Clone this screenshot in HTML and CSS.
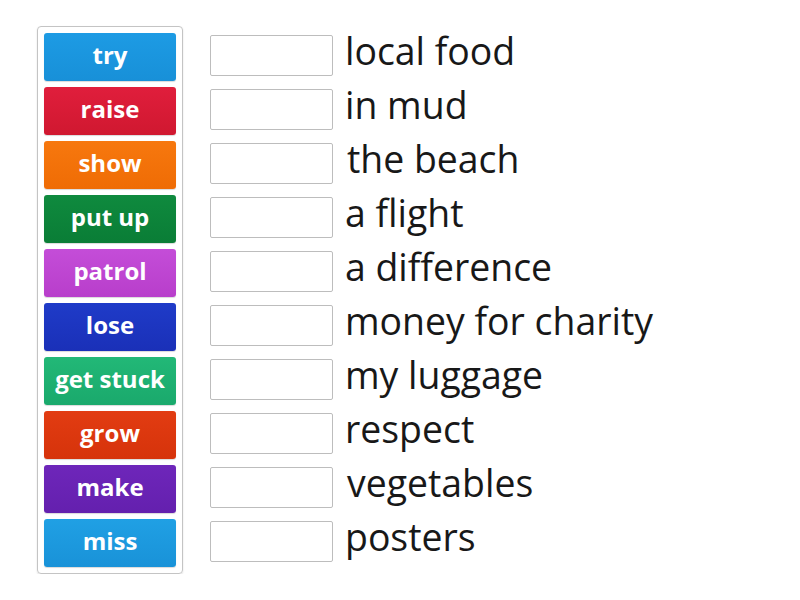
FILE: index.html
```html
<!DOCTYPE html>
<html>
<head>
<meta charset="utf-8">
<link rel="stylesheet" href="styles.css">
</head>
<body>
<div class="page">
  <div class="bank">
    <div class="tile c-try">try</div>
    <div class="tile c-raise">raise</div>
    <div class="tile c-show">show</div>
    <div class="tile c-putup">put up</div>
    <div class="tile c-patrol">patrol</div>
    <div class="tile c-lose">lose</div>
    <div class="tile c-stuck">get stuck</div>
    <div class="tile c-grow">grow</div>
    <div class="tile c-make">make</div>
    <div class="tile c-miss">miss</div>
  </div>
  <div class="rows">
    <div class="row"><div class="slot"></div><div class="phrase">local food</div></div>
    <div class="row"><div class="slot"></div><div class="phrase">in mud</div></div>
    <div class="row"><div class="slot"></div><div class="phrase shift">the beach</div></div>
    <div class="row"><div class="slot"></div><div class="phrase">a flight</div></div>
    <div class="row"><div class="slot"></div><div class="phrase">a difference</div></div>
    <div class="row"><div class="slot"></div><div class="phrase">money for charity</div></div>
    <div class="row"><div class="slot"></div><div class="phrase">my luggage</div></div>
    <div class="row"><div class="slot"></div><div class="phrase">respect</div></div>
    <div class="row"><div class="slot"></div><div class="phrase shift">vegetables</div></div>
    <div class="row"><div class="slot"></div><div class="phrase">posters</div></div>
  </div>
</div>
</body>
</html>
```

FILE: styles.css
```css
html, body {
  margin: 0;
  padding: 0;
  background: #ffffff;
}

.page {
  display: flex;
  align-items: flex-start;
  padding: 26px 0 0 37px;
  font-family: "Open Sans", "Noto Sans", sans-serif;
}

.bank {
  display: flex;
  flex-direction: column;
  gap: 6px;
  padding: 6px;
  border: 1px solid #c4c4c4;
  border-radius: 4px;
  box-shadow: 0 1px 2px rgba(0,0,0,0.12);
}

.tile {
  box-sizing: border-box;
  width: 132px;
  height: 48px;
  padding-bottom: 6px;
  border-radius: 3px;
  display: flex;
  align-items: center;
  justify-content: center;
  color: #ffffff;
  font-weight: 700;
  font-size: 24px;
  box-shadow: 0 1px 1px rgba(0,0,0,0.15);
}

.c-try    { background: linear-gradient(#1d9be4, #1890d8); }
.c-raise  { background: linear-gradient(#e01e3c, #d01830); }
.c-show   { background: linear-gradient(#f7780e, #ef6c05); }
.c-putup  { background: linear-gradient(#0f8a3e, #0a7d36); }
.c-patrol { background: linear-gradient(#c44dd8, #b83ecb); }
.c-lose   { background: linear-gradient(#1f3bc8, #1a30b8); }
.c-stuck  { background: linear-gradient(#22b877, #1aa96c); }
.c-grow   { background: linear-gradient(#e23c12, #d6330b); }
.c-make   { background: linear-gradient(#6e26ba, #6420ae); }
.c-miss   { background: linear-gradient(#20a0e4, #1992d8); }

.rows {
  display: flex;
  flex-direction: column;
  gap: 13px;
  margin-left: 27px;
  padding-top: 9px;
}

.row {
  display: flex;
  align-items: flex-start;
  gap: 12px;
}

.slot {
  width: 121px;
  height: 39px;
  border: 1px solid #bdbdbd;
  border-radius: 2px;
  background: #ffffff;
}

.phrase {
  font-size: 37.4px;
  line-height: 32px;
  color: #181818;
  white-space: nowrap;
}

.shift {
  margin-left: 2px;
}
```
